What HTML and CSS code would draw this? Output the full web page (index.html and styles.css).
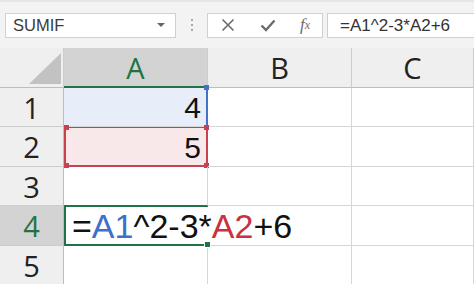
FILE: index.html
```html
<!DOCTYPE html>
<html lang="en">
<head>
  <meta charset="UTF-8" />
  <title>SUMIF</title>
  <link rel="stylesheet" href="styles.css">
</head>
<body>

<!-- formula bar -->
<div class="toolbar">
  <div class="namebox">
    <span>SUMIF</span>
    <span class="drop"></span>
  </div>
  <div class="grip"><i></i><i></i><i></i></div>
  <div class="fbuttons">
    <span class="fbtn">
      <svg width="14" height="14" viewBox="0 0 14 14"><path d="M1.5 1.5 L12.5 12.5 M12.5 1.5 L1.5 12.5" stroke="#6b6b6b" stroke-width="1.6" fill="none"/></svg>
    </span>
    <span class="fbtn">
      <svg width="16" height="14" viewBox="0 0 16 14"><path d="M1.5 7.5 L6 12 L14.5 2.5" stroke="#6b6b6b" stroke-width="2.4" fill="none"/></svg>
    </span>
    <span class="fbtn fx">f<sub>x</sub></span>
  </div>
  <div class="finput">=A1^2-3*A2+6</div>
</div>

<!-- sheet -->
<div class="sheet">
  <div class="corner"><div class="tri"></div></div>
  <div class="colhead active">A</div>
  <div class="colhead">B</div>
  <div class="colhead">C</div>

  <div class="rowhead">1</div>
  <div class="cell num ref-blue">4<b class="knob knob-tr"></b></div>
  <div class="cell"></div>
  <div class="cell"></div>

  <div class="rowhead">2</div>
  <div class="cell num ref-red">5
    <b class="knob knob-tl"></b><b class="knob knob-tr"></b><b class="knob knob-bl"></b><b class="knob knob-br"></b>
  </div>
  <div class="cell"></div>
  <div class="cell"></div>

  <div class="rowhead">3</div>
  <div class="cell above-active"></div>
  <div class="cell"></div>
  <div class="cell"></div>

  <div class="rowhead active">4</div>
  <div class="cell editing">=<span class="c-blue">A1</span>^2-3*<span class="c-red">A2</span>+6<b class="handle"></b></div>
  <div class="cell"></div>
  <div class="cell"></div>

  <div class="rowhead">5</div>
  <div class="cell"></div>
  <div class="cell"></div>
  <div class="cell"></div>
</div>

</body>
</html>
```

FILE: styles.css
```css
html, body {
  margin: 0;
  padding: 0;
  overflow: hidden;
  background: #fff;
  font-family: "Liberation Sans", Arial, sans-serif;
}

.toolbar {
  display: flex;
  align-items: center;
  height: 48px;
  box-sizing: border-box;
  padding: 0 0 0 5px;
  background: #f3f3f3;
  border-top: 2px solid #e6e6e6;
}
.namebox {
  display: flex;
  align-items: center;
  justify-content: space-between;
  width: 171px;
  height: 25px;
  box-sizing: border-box;
  padding: 0 8px 0 7px;
  background: #fff;
  border: 1px solid #d0d0d0;
  font-size: 16.5px;
  color: #3a3a3a;
}
.drop {
  width: 0;
  height: 0;
  border-left: 4px solid transparent;
  border-right: 4px solid transparent;
  border-top: 4px solid #666;
  margin-right: 2px;
}
.grip {
  width: 31px;
  display: flex;
  flex-direction: column;
  align-items: center;
  gap: 3px;
}
.grip i {
  display: block;
  width: 2px;
  height: 2px;
  background: #a8a8a8;
}
.fbuttons {
  display: flex;
  align-items: center;
  width: 116px;
  height: 25px;
  box-sizing: border-box;
  background: #fff;
  border: 1px solid #d0d0d0;
}
.fbtn {
  display: flex;
  align-items: center;
  justify-content: center;
  width: 40px;
  height: 100%;
}
.fbtn.fx {
  width: 34px;
  font-family: "Liberation Serif", "Times New Roman", serif;
  font-style: italic;
  font-size: 17px;
  color: #6b6b6b;
}
.fbtn.fx sub {
  font-size: 12px;
  vertical-align: -2px;
}
.finput {
  flex: 1;
  height: 25px;
  box-sizing: border-box;
  margin-left: 4px;
  padding: 2px 0 0 12px;
  background: #fff;
  border: 1px solid #d0d0d0;
  border-right: none;
  font-size: 17px;
  color: #333;
}

.sheet {
  display: grid;
  grid-template-columns: 64px 144px 144px 122px;
  grid-template-rows: 40px 39px 40px 39px 40px 39px;
}
.corner, .colhead, .rowhead {
  background: #efefef;
  box-sizing: border-box;
  border-right: 1px solid #cdcdcd;
  border-bottom: 1px solid #bdbdbd;
  font-family: "Open Sans", "Noto Sans", sans-serif;
  font-size: 29px;
  color: #222;
  display: flex;
  align-items: center;
  justify-content: center;
}
.corner {
  align-items: flex-end;
  justify-content: flex-end;
  padding: 0 2px 3px 0;
}
.tri {
  width: 32px;
  height: 31px;
  background: #c2c2c2;
  clip-path: polygon(100% 0, 100% 100%, 0 100%);
}
.colhead.active {
  background: #d3d3d3;
  color: #217346;
  border-bottom: 2px solid #217346;
}
.rowhead {
  border-right-color: #bdbdbd;
  border-bottom-color: #cdcdcd;
}
.rowhead.active {
  background: #d3d3d3;
  color: #217346;
}

.cell {
  position: relative;
  box-sizing: border-box;
  border-right: 1px solid #d6d6d6;
  border-bottom: 1px solid #d6d6d6;
  font-size: 30px;
  color: #111;
  display: flex;
  align-items: center;
  padding: 2px 5px 0 7px;
  white-space: nowrap;
}
.num {
  justify-content: flex-end;
}
.ref-blue {
  background: #e7eef9;
  border-right: 2px solid #4472c4;
}
.ref-red {
  background: #f9e8e9;
  border: 2px solid #c9404f;
  border-top-width: 1px;
}
.knob {
  position: absolute;
  width: 5px;
  height: 5px;
}
.ref-blue .knob { background: #4472c4; }
.ref-red .knob { background: #c9404f; }
.knob-tl { left: -2px; top: -3px; }
.knob-tr { right: -3px; top: -3px; }
.knob-bl { left: -2px; bottom: -3px; }
.knob-br { right: -3px; bottom: -3px; }

.above-active {
  border-bottom-color: #217346;
}
.editing {
  z-index: 2;
  overflow: visible;
  border-right: none;
  border-left: 2px solid #217346;
  border-bottom: 2px solid #217346;
  box-shadow: inset 0 1px 0 #217346;
  padding-left: 6px;
  font-size: 34px;
}
.c-blue { color: #3d6fcd; }
.c-red { color: #c8323f; }
.handle {
  position: absolute;
  right: -3px;
  bottom: -4px;
  width: 5px;
  height: 5px;
  background: #217346;
  border: 1px solid #fff;
}
```
